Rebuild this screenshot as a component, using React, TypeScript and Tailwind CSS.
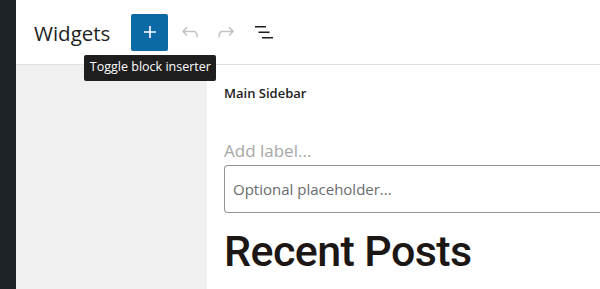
import React from "react";

export default function App() {
  return (
    <div className="w-[600px] h-[289px] overflow-hidden flex bg-white" style={{ fontFamily: '"Open Sans", "Noto Sans", sans-serif' }}>
      <div className="w-[16px] shrink-0 bg-[#1d2327]" />
      <div className="flex-1 flex flex-col min-w-0 relative">
        <div className="h-[65px] shrink-0 border-b border-[#e0e0e0] flex items-center pl-[18px]">
          <h1 className="text-[20.5px] text-[#1e1e1e] font-normal mr-[21px] leading-none pt-[2px]">Widgets</h1>
          <div className="relative">
            <button className="w-[37px] h-[37px] bg-[#0b6aa6] rounded-[2px] flex items-center justify-center">
              <svg width="24" height="24" viewBox="0 0 24 24" fill="#fff"><path d="M18 11.2h-5.2V6h-1.6v5.2H6v1.6h5.2V18h1.6v-5.2H18z" /></svg>
            </button>
            <div className="absolute left-[-47px] top-[41px] h-[26px] w-[132px] justify-center bg-[#1e1e1e] rounded-[2px] text-white text-[12.5px] flex items-center whitespace-nowrap z-10">Toggle block inserter</div>
          </div>
          <div className="w-[36px] h-[36px] flex items-center justify-center ml-[4px]">
            <svg width="24" height="24" viewBox="0 0 24 24" fill="#c3c3c3"><path d="M18.3 11.7c-.6-.6-1.4-.9-2.3-.9H6.7l2.9-3.3-1.1-1-4.5 5L8.5 16l1-1-2.7-2.7H16c.5 0 .9.2 1.3.5 1 1 1 3.4 1 4.5v.3h1.5v-.2c0-1.5 0-4.3-1.5-5.7z" /></svg>
          </div>
          <div className="w-[36px] h-[36px] flex items-center justify-center">
            <svg width="24" height="24" viewBox="0 0 24 24" fill="#c3c3c3"><path d="M15.6 6.5l-1.1 1 2.9 3.3H8c-.9 0-1.7.3-2.3.9-1.4 1.5-1.4 4.2-1.4 5.6v.2h1.5v-.3c0-1.1 0-3.5 1-4.5.3-.3.7-.5 1.3-.5h9.2L14.5 15l1.1 1.1 4.6-4.6-4.6-5z" /></svg>
          </div>
          <div className="w-[36px] h-[36px] flex items-center justify-center ml-[2px]">
            <svg width="24" height="24" viewBox="0 0 24 24" fill="#1e1e1e"><path d="M3 6h11v1.5H3V6zm3.5 5.5h11V13h-11v-1.5zM21 17H10v1.5h11V17z" /></svg>
          </div>
        </div>
        <div className="flex-1 flex min-h-0">
          <div className="w-[191px] shrink-0 bg-[#f0f0f0]" />
          <div className="flex-1 min-w-0 pl-[17px] pt-[19px]">
            <div className="text-[13px] font-semibold text-[#1e1e1e] leading-[18px]">Main Sidebar</div>
            <div className="mt-[37px] text-[17px] text-[#a7a7a7] leading-[24px]">Add label...</div>
            <div className="mt-[2px] h-[48px] border border-[#949494] border-r-0 rounded-l-[4px] flex items-center pl-[8px] text-[15px] text-[#6c6c6c]">Optional placeholder...</div>
            <div className="mt-[12px] text-[43px] font-medium text-[#1c1714] leading-[52px] tracking-[-0.6px]" style={{ fontFamily: 'Roboto, "Noto Sans", sans-serif' }}>Recent Posts</div>
          </div>
        </div>
      </div>
    </div>
  );
}
